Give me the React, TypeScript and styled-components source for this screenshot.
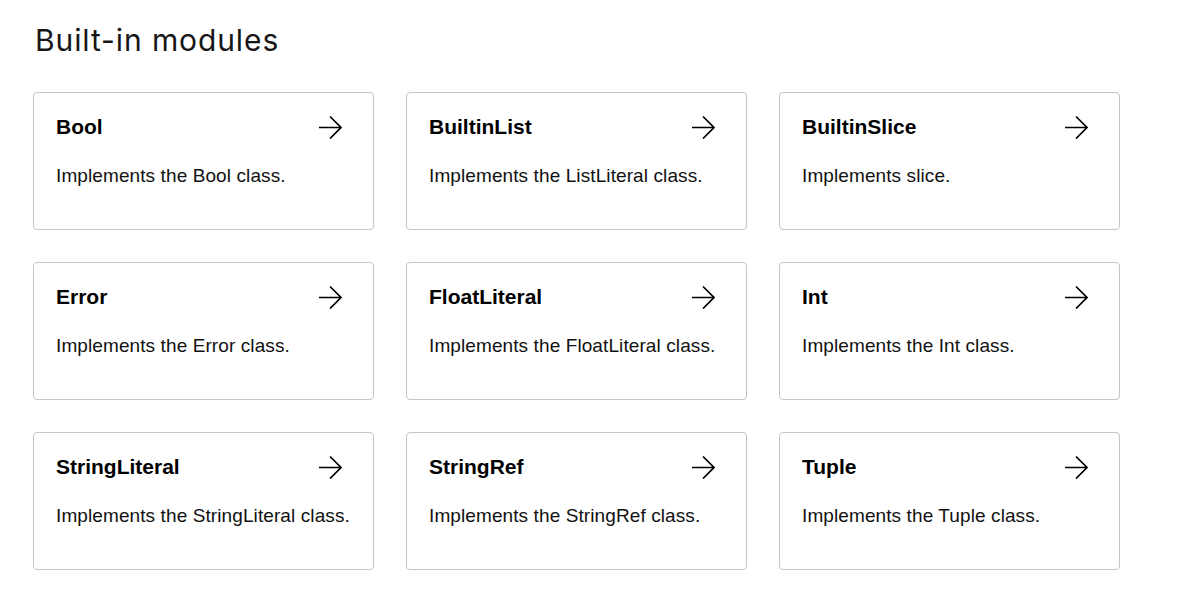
import React from 'react'
import styled, { createGlobalStyle } from 'styled-components'

const GlobalStyle = createGlobalStyle`
    body {
        margin: 0;
        background: #ffffff;
        font-family: "Liberation Sans", Arial, sans-serif;
        color: #161616;
    }
`

const Page = styled.main`
    padding: 20px 0 0 33px;
`

const Heading = styled.h1`
    margin: 0 0 32px 2px;
    font-family: Inter, "Open Sans", sans-serif;
    font-weight: 400;
    font-size: 30px;
    letter-spacing: 0.9px;
    line-height: 40px;
    color: #161616;
`

const Grid = styled.div`
    display: grid;
    grid-template-columns: repeat(3, 341px);
    grid-auto-rows: 138px;
    gap: 32px;
`

const Card = styled.a`
    display: flex;
    flex-direction: column;
    box-sizing: border-box;
    padding: 22px 24px 0 22px;
    border: 1px solid #c1c7cd;
    border-radius: 4px;
    background: #fff;
    color: #000;
    text-decoration: none;
`

const CardHead = styled.div`
    display: flex;
    align-items: center;
    justify-content: space-between;
`

const CardTitle = styled.h3`
    margin: 0;
    font-size: 21px;
    font-weight: 700;
    line-height: 24px;
`

const Desc = styled.p`
    margin: 25px 0 0;
    font-size: 19px;
    letter-spacing: 0.1px;
    line-height: 24px;
    white-space: nowrap;
    color: #111;
`

const Arrow = () => (
    <svg width="24" height="24" viewBox="0 0 24 24" fill="none" stroke="#000" strokeWidth="1.7" style={{ marginRight: 7 }}>
        <path d="M1 12.5h21.5M12 1.5l11 11-11 11" />
    </svg>
)

const modules = [
    { name: 'Bool', desc: 'Implements the Bool class.' },
    { name: 'BuiltinList', desc: 'Implements the ListLiteral class.' },
    { name: 'BuiltinSlice', desc: 'Implements slice.' },
    { name: 'Error', desc: 'Implements the Error class.' },
    { name: 'FloatLiteral', desc: 'Implements the FloatLiteral class.' },
    { name: 'Int', desc: 'Implements the Int class.' },
    { name: 'StringLiteral', desc: 'Implements the StringLiteral class.' },
    { name: 'StringRef', desc: 'Implements the StringRef class.' },
    { name: 'Tuple', desc: 'Implements the Tuple class.' },
]

const App: React.FC = () => {
    return (
        <>
            <GlobalStyle />
            <Page>
                <Heading>Built-in modules</Heading>
                <Grid>
                    {modules.map((m) => (
                        <Card key={m.name} href="#">
                            <CardHead>
                                <CardTitle>{m.name}</CardTitle>
                                <Arrow />
                            </CardHead>
                            <Desc>{m.desc}</Desc>
                        </Card>
                    ))}
                </Grid>
            </Page>
        </>
    )
}

export default App
